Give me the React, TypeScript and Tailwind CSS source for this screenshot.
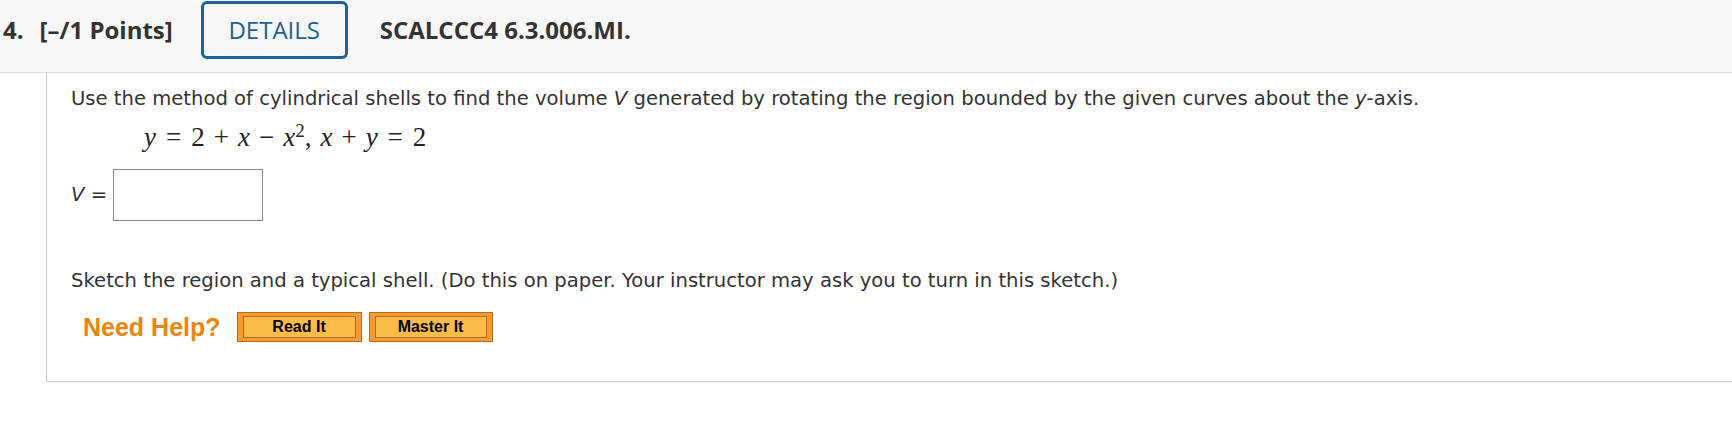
import React from 'react';

const HelpButton: React.FC<{ label: string; width: string }> = ({ label, width }) => (
  <button
    className={`${width} h-[30px] box-border border border-[#b9691d] bg-[#f49c33] px-[5px] py-[3px]`}
  >
    <span
      className="flex h-full w-full items-center justify-center border border-[#b36b22] bg-[#fbbd48] text-[16px] font-bold leading-none text-black"
      style={{ fontFamily: '"Liberation Sans", Arial, sans-serif' }}
    >
      {label}
    </span>
  </button>
);

export default function App() {
  return (
    <div className="w-full bg-white text-[#333]" style={{ fontFamily: '"DejaVu Sans", Verdana, sans-serif' }}>
      {/* question header */}
      <div
        className="box-border flex h-[73px] items-center border-b border-[#dcdcdc] bg-[#f7f7f7] pb-[12px] text-[24px] font-bold text-[#333]"
        style={{ fontFamily: '"Open Sans", sans-serif' }}
      >
        <span className="ml-[3px]">4.</span>
        <span className="ml-[16px]">[–/1 Points]</span>
        <div className="ml-[28px] flex h-[58px] w-[147px] items-center justify-center rounded-[6px] border-[3px] border-[#1d6198] text-[24px] font-normal text-[#1d6198]">
          DETAILS
        </div>
        <span className="ml-[32px]">SCALCCC4 6.3.006.MI.</span>
      </div>

      {/* question body */}
      <div className="ml-[46px] box-border flex h-[309px] flex-col border-b border-l border-[#cccccc] pl-[24px] text-[19.6px]">
        <p className="mt-[15px] h-[22px] leading-[22px]">
          Use the method of cylindrical shells to find the volume <i>V</i> generated by rotating the region bounded by
          the given curves about the <i>y</i>-axis.
        </p>

        <div
          className="ml-[73px] mt-[11px] flex h-[32px] items-baseline text-[27px] leading-[32px] text-[#222]"
          style={{ fontFamily: '"Liberation Serif", "DejaVu Serif", serif' }}
        >
          <i>y</i>
          <span className="mx-[10px]">=</span>
          <span>2</span>
          <span className="mx-[9px]">+</span>
          <i>x</i>
          <span className="mx-[9px]">−</span>
          <i>x</i>
          <sup className="text-[19px]">2</sup>
          <span className="mr-[9px]">,</span>
          <i>x</i>
          <span className="mx-[9px]">+</span>
          <i>y</i>
          <span className="mx-[10px]">=</span>
          <span>2</span>
        </div>

        <div className="mt-[16px] flex h-[52px] items-center">
          <span className="w-[42px]">
            <i>V</i> =
          </span>
          <input className="box-border h-[52px] w-[150px] border border-[#8a8a8a] bg-white outline-none" />
        </div>

        <p className="mt-[49px] h-[22px] leading-[22px]">
          Sketch the region and a typical shell. (Do this on paper. Your instructor may ask you to turn in this sketch.)
        </p>

        <div className="mt-[20px] flex items-center">
          <span
            className="ml-[12px] text-[25px] font-bold leading-none text-[#ec8410]"
            style={{ fontFamily: '"Liberation Sans", Arial, sans-serif' }}
          >
            Need Help?
          </span>
          <div className="ml-[16px] flex gap-[7px]">
            <HelpButton label="Read It" width="w-[125px]" />
            <HelpButton label="Master It" width="w-[124px]" />
          </div>
        </div>
      </div>
    </div>
  );
}
